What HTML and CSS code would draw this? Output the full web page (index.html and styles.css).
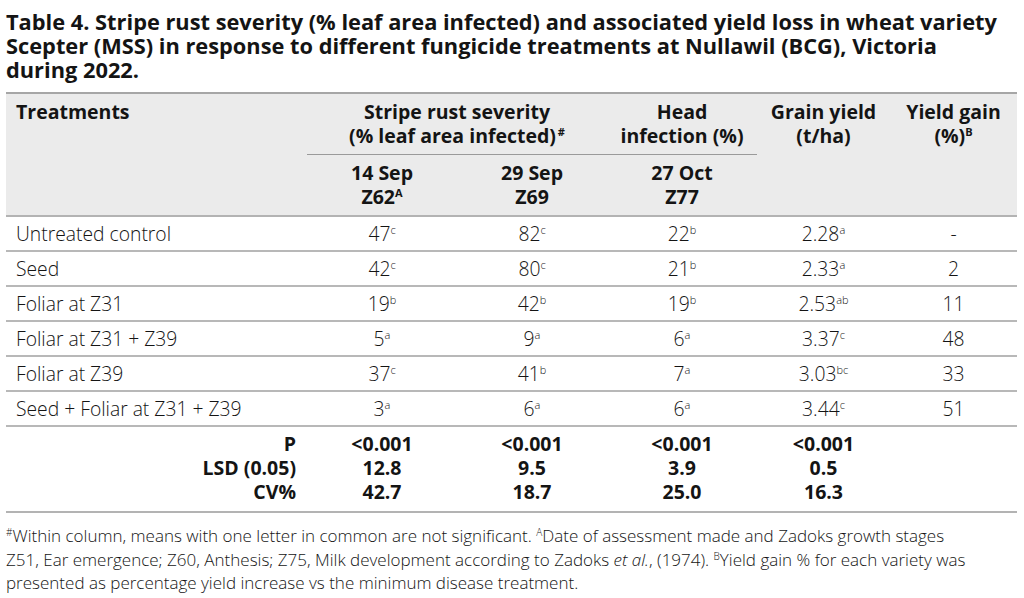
FILE: index.html
```html
<!DOCTYPE html>
<html lang="en">
<head>
    <meta charset="UTF-8">
    <meta name="viewport" content="width=device-width, initial-scale=1.0">
    <title>Table 4. Stripe rust severity</title>
    <link rel="stylesheet" href="styles.css">
</head>
<body>
<div class="page">
    <h1 class="caption">Table 4. Stripe rust severity (% leaf area infected) and associated yield loss in wheat variety<br>Scepter (MSS) in response to different fungicide treatments at Nullawil (BCG), Victoria<br>during 2022.</h1>

    <table class="results">
        <colgroup>
            <col class="c-treat">
            <col class="c-date">
            <col class="c-date">
            <col class="c-date">
            <col class="c-yield">
            <col class="c-gain">
        </colgroup>
        <thead>
            <tr>
                <th class="treat" rowspan="2">Treatments</th>
                <th class="group" colspan="2">Stripe rust severity<br>(% leaf area infected)<sup>&thinsp;#</sup></th>
                <th class="group">Head<br>infection (%)</th>
                <th class="tall" rowspan="2">Grain yield<br>(t/ha)</th>
                <th class="tall" rowspan="2">Yield gain<br>(%)<sup>B</sup></th>
            </tr>
            <tr>
                <th>14 Sep<br>Z62<sup>A</sup></th>
                <th>29 Sep<br>Z69</th>
                <th>27 Oct<br>Z77</th>
            </tr>
        </thead>
        <tbody class="data">
            <tr>
                <td class="name">Untreated control</td>
                <td>47<sup>c</sup></td>
                <td>82<sup>c</sup></td>
                <td>22<sup>b</sup></td>
                <td>2.28<sup>a</sup></td>
                <td>-</td>
            </tr>
            <tr>
                <td class="name">Seed</td>
                <td>42<sup>c</sup></td>
                <td>80<sup>c</sup></td>
                <td>21<sup>b</sup></td>
                <td>2.33<sup>a</sup></td>
                <td>2</td>
            </tr>
            <tr>
                <td class="name">Foliar at Z31</td>
                <td>19<sup>b</sup></td>
                <td>42<sup>b</sup></td>
                <td>19<sup>b</sup></td>
                <td>2.53<sup>ab</sup></td>
                <td>11</td>
            </tr>
            <tr>
                <td class="name">Foliar at Z31 + Z39</td>
                <td>5<sup>a</sup></td>
                <td>9<sup>a</sup></td>
                <td>6<sup>a</sup></td>
                <td>3.37<sup>c</sup></td>
                <td>48</td>
            </tr>
            <tr>
                <td class="name">Foliar at Z39</td>
                <td>37<sup>c</sup></td>
                <td>41<sup>b</sup></td>
                <td>7<sup>a</sup></td>
                <td>3.03<sup>bc</sup></td>
                <td>33</td>
            </tr>
            <tr>
                <td class="name">Seed + Foliar at Z31 + Z39</td>
                <td>3<sup>a</sup></td>
                <td>6<sup>a</sup></td>
                <td>6<sup>a</sup></td>
                <td>3.44<sup>c</sup></td>
                <td>51</td>
            </tr>
        </tbody>
        <tbody class="stats">
            <tr class="first">
                <th>P</th>
                <td>&lt;0.001</td>
                <td>&lt;0.001</td>
                <td>&lt;0.001</td>
                <td>&lt;0.001</td>
                <td></td>
            </tr>
            <tr>
                <th>LSD (0.05)</th>
                <td>12.8</td>
                <td>9.5</td>
                <td>3.9</td>
                <td>0.5</td>
                <td></td>
            </tr>
            <tr class="last">
                <th>CV%</th>
                <td>42.7</td>
                <td>18.7</td>
                <td>25.0</td>
                <td>16.3</td>
                <td></td>
            </tr>
        </tbody>
    </table>

    <p class="notes"><sup>#</sup>Within column, means with one letter in common are not significant. <sup>A</sup>Date of assessment made and Zadoks growth stages<br>Z51, Ear emergence; Z60, Anthesis; Z75, Milk development according to Zadoks <em>et al.</em>, (1974). <sup>B</sup>Yield gain % for each variety was<br>presented as percentage yield increase vs the minimum disease treatment.</p>
</div>
</body>
</html>
```

FILE: styles.css
```css
body {
    margin: 0;
    background: #fff;
    color: #141414;
    font-family: "Open Sans", "Liberation Sans", sans-serif;
}
.page {
    padding: 10px 7px 0 6px;
}
.caption {
    margin: 0 0 10px;
    font-size: 21.8px;
    line-height: 24px;
    font-weight: 700;
    white-space: nowrap;
}
sup {
    font-size: 11px;
    line-height: 0;
    vertical-align: 7px;
}
.results {
    width: 1011px;
    border-collapse: collapse;
    table-layout: fixed;
}
.c-treat { width: 301px; }
.c-date { width: 150px; }
.c-yield { width: 133px; }
.c-gain { width: 127px; }

.results thead th {
    background: #ebebeb;
    font-size: 19.5px;
    line-height: 24px;
    font-weight: 700;
    padding: 6px 2px;
    text-align: center;
    vertical-align: top;
    border-bottom: 2px solid #b3b3b3;
}
.results thead tr:first-child th {
    border-top: 2px solid #a6a6a6;
}
.results thead th.treat {
    text-align: left;
    padding-left: 10px;
}
.results thead th.group {
    border-bottom: 1px solid #9a9a9a;
}
.data td {
    font-size: 19.3px;
    font-weight: 300;
    line-height: 24px;
    padding: 5px 4px 4px;
    text-align: center;
    border-bottom: 2px solid #b8b8b8;
}
.data td.name {
    text-align: left;
    padding-left: 10px;
}
.data sup {
    font-size: 11px;
    vertical-align: 7px;
}
.stats th,
.stats td {
    font-size: 19.5px;
    line-height: 24px;
    font-weight: 700;
    padding: 0 4px;
    text-align: center;
}
.stats th {
    text-align: right;
    padding-right: 11px;
}
.stats tr.first th,
.stats tr.first td {
    padding-top: 5px;
}
.stats tr.last th,
.stats tr.last td {
    padding-bottom: 7px;
    border-bottom: 2px solid #b3b3b3;
}
.notes {
    margin: 11px 0 0;
    font-size: 17px;
    line-height: 23.5px;
    font-weight: 300;
    white-space: nowrap;
}
.notes sup {
    font-size: 10px;
    vertical-align: 6px;
}
```
